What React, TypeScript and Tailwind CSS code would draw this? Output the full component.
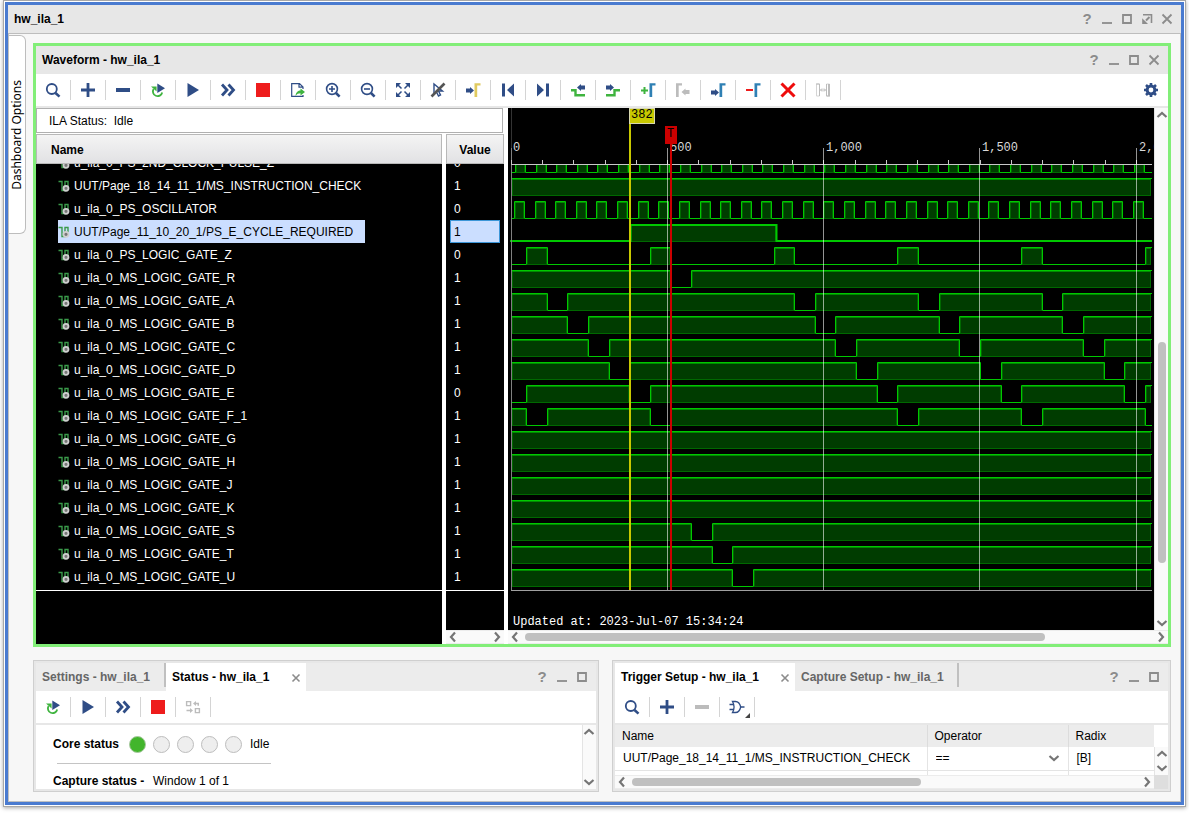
import { useState } from 'react';
import type { ReactNode } from 'react';
import clsx from 'clsx';

const NAVY = '#2f4d86';
const GREEN = '#3fb43f';
const STEEL = '#2f80b4';
const MUTED = '#bcbcbc';

const LIT = '#00c800';
const SHADE = '#008a00';
const DIM = '#006800';
const FILL = '#003c00';

// Waveform canvas geometry
const WAVE_LEFT = 3;
const WAVE_RIGHT = 643;
const WAVE_TOP = 56;
const WAVE_BOTTOM = 482;
const ROW_TOP = 43;
const ROW_HEIGHT = 23;

type Span = [number, number];

// Position of the n-th gate clock edge
const edge = (n: number) => Math.floor(18.5 + 20.633 * n);

const gate = (...steps: number[]): Span[] => {
  const spans: Span[] = [];
  let start = WAVE_LEFT;
  for (const n of steps) {
    spans.push([start, edge(n)]);
    start = edge(n + 1);
  }
  if (start < WAVE_RIGHT) spans.push([start, WAVE_RIGHT]);
  return spans;
};

const pulses = (first: number): Span[] =>
  Array.from({ length: 31 }, (_, i) => {
    const x = Math.floor(first + 20.633 * i);
    return [x, x + 10] as Span;
  });

const HIGH: Span[] = [[WAVE_LEFT, WAVE_RIGHT]];

interface Signal {
  name: string;
  value: string;
  spans: Span[];
}

const SIGNALS: Signal[] = [
  { name: 'u_ila_0_PS_2ND_CLOCK_PULSE_Z', value: '0', spans: pulses(7.4) },
  { name: 'UUT/Page_18_14_11_1/MS_INSTRUCTION_CHECK', value: '1', spans: HIGH },
  { name: 'u_ila_0_PS_OSCILLATOR', value: '0', spans: pulses(6.4) },
  { name: 'UUT/Page_11_10_20_1/PS_E_CYCLE_REQUIRED', value: '1', spans: [[122, 268]] },
  {
    name: 'u_ila_0_PS_LOGIC_GATE_Z',
    value: '0',
    spans: [0, 6, 12, 18, 24, 30].map((n) => [edge(n), Math.min(edge(n + 1), WAVE_RIGHT)] as Span),
  },
  { name: 'u_ila_0_MS_LOGIC_GATE_R', value: '1', spans: gate(7) },
  { name: 'u_ila_0_MS_LOGIC_GATE_A', value: '1', spans: gate(1, 13, 19, 25) },
  { name: 'u_ila_0_MS_LOGIC_GATE_B', value: '1', spans: gate(2, 14, 20, 26) },
  { name: 'u_ila_0_MS_LOGIC_GATE_C', value: '1', spans: gate(3, 15, 21, 27) },
  { name: 'u_ila_0_MS_LOGIC_GATE_D', value: '1', spans: gate(4, 16, 22, 28) },
  { name: 'u_ila_0_MS_LOGIC_GATE_E', value: '0', spans: gate(-1, 5, 17, 23, 29).slice(1) },
  { name: 'u_ila_0_MS_LOGIC_GATE_F_1', value: '1', spans: gate(0, 6, 18, 24, 30) },
  { name: 'u_ila_0_MS_LOGIC_GATE_G', value: '1', spans: HIGH },
  { name: 'u_ila_0_MS_LOGIC_GATE_H', value: '1', spans: HIGH },
  { name: 'u_ila_0_MS_LOGIC_GATE_J', value: '1', spans: HIGH },
  { name: 'u_ila_0_MS_LOGIC_GATE_K', value: '1', spans: HIGH },
  { name: 'u_ila_0_MS_LOGIC_GATE_S', value: '1', spans: gate(8) },
  { name: 'u_ila_0_MS_LOGIC_GATE_T', value: '1', spans: gate(9) },
  { name: 'u_ila_0_MS_LOGIC_GATE_U', value: '1', spans: gate(10) },
];

function Icon({ children }: { children: ReactNode }) {
  return (
    <svg viewBox="0 0 16 16" className="size-4 shrink-0" fill="none" aria-hidden="true">
      {children}
    </svg>
  );
}

const arrowRight = (x: number, y: number, color: string) => (
  <path d={`M${x} ${y - 2}h4v-1.5l4 3.5-4 3.5v-1.5h-4z`} fill={color} />
);
const arrowLeft = (x: number, y: number, color: string) => (
  <path d={`M${x} ${y - 2}h-4v-1.5l-4 3.5 4 3.5v-1.5h4z`} fill={color} />
);
const marker = (x: number, color: string) => (
  <path d={`M${x} 15V1.3h6v2.200h-3.300V15z`} fill={color} />
);

const ICONS = {
  search: (
    <Icon>
      <circle cx="6.8" cy="7" r="5" stroke={NAVY} strokeWidth="1.8" />
      <path d="M10.5 11l4 3.6" stroke={NAVY} strokeWidth="2.6" />
    </Icon>
  ),
  plus: (
    <Icon>
      <path d="M8 1v14M1 8h14" stroke={NAVY} strokeWidth="2.8" />
    </Icon>
  ),
  minus: (
    <Icon>
      <path d="M1 8h14" stroke={NAVY} strokeWidth="4" />
    </Icon>
  ),
  minusOff: (
    <Icon>
      <path d="M1 8h14" stroke={MUTED} strokeWidth="4" />
    </Icon>
  ),
  rerun: (
    <Icon>
      <path d="M3.6 7a4.700 4.700 0 1 0 8.600 3.500" stroke={GREEN} strokeWidth="1.8" />
      <path d="M1 4.600h5.600v5L4.4 7.4z" fill={GREEN} />
      <path d="M7.3 1.5L15 6.2l-7.7 4.8z" fill={NAVY} />
    </Icon>
  ),
  play: (
    <Icon>
      <path d="M2.5 1L14 8 2.5 15z" fill={NAVY} />
    </Icon>
  ),
  forward: (
    <Icon>
      <path d="M2 2.5L7 8l-5 5.5M8.5 2.5l5 5.5-5 5.5" stroke={NAVY} strokeWidth="2.8" />
    </Icon>
  ),
  stop: (
    <Icon>
      <path d="M1 1h14v14H1z" fill="#ee1c1c" />
    </Icon>
  ),
  exportFile: (
    <Icon>
      <path d="M13 7V5L9.5 1.6H1.7v12.8H13V13M9 1.6V5.2h4" stroke={NAVY} strokeWidth="1.2" />
      <path d="M5.5 14c.6-4 2.6-5.4 5-5.4V6.4L15 10l-4.5 3.4v-2.1c-2 0-3.6.7-5 2.7z" fill={GREEN} />
    </Icon>
  ),
  zoomIn: (
    <Icon>
      <circle cx="7" cy="7" r="5.4" stroke={NAVY} strokeWidth="1.6" />
      <path d="M4 7h6M7 4v6" stroke={NAVY} strokeWidth="1.6" />
      <path d="M11 11l3.6 3.6" stroke={NAVY} strokeWidth="2.6" />
    </Icon>
  ),
  zoomOut: (
    <Icon>
      <circle cx="7" cy="7" r="5.4" stroke={NAVY} strokeWidth="1.6" />
      <path d="M4 7h6" stroke={NAVY} strokeWidth="1.6" />
      <path d="M11 11l3.6 3.6" stroke={NAVY} strokeWidth="2.6" />
    </Icon>
  ),
  fit: (
    <Icon>
      <path d="M1 1h5L1 6zM15 1h-5l5 5zM1 15h5l-5-5zM15 15h-5l5-5z" fill={NAVY} />
      <path d="M2 2l4.5 4.5M14 2L9.5 6.5M2 14l4.5-4.5M14 14L9.5 9.5" stroke={NAVY} strokeWidth="1.5" />
    </Icon>
  ),
  noCursor: (
    <Icon>
      <path d="M4 2v10l2.500-2 2 4 2-1-2-4h4z" stroke={NAVY} strokeWidth="1.4" />
      <path d="M1.5 14.5L14.500 1.5" stroke="#555" strokeWidth="2.6" />
    </Icon>
  ),
  toCursor: (
    <Icon>
      {arrowRight(1, 8.5, NAVY)}
      {marker(9.5, '#e0ca60')}
    </Icon>
  ),
  first: (
    <Icon>
      <path d="M2 1.600h3v13H2zM14 1.600v13L7 8z" fill={NAVY} />
    </Icon>
  ),
  last: (
    <Icon>
      <path d="M11 1.600h3v13h-3zM2 1.600v13L9 8z" fill={NAVY} />
    </Icon>
  ),
  prevEdge: (
    <Icon>
      <path d="M1 8.300h4.500v5H15" stroke={GREEN} strokeWidth="2.4" />
      {arrowLeft(15, 5.5, NAVY)}
    </Icon>
  ),
  nextEdge: (
    <Icon>
      <path d="M1 13.300h8.500v-5H15" stroke={GREEN} strokeWidth="2.4" />
      {arrowRight(1, 5.5, NAVY)}
    </Icon>
  ),
  addMarker: (
    <Icon>
      <path d="M4.5 5v7M1 8.5h7" stroke={GREEN} strokeWidth="2" />
      {marker(9.5, STEEL)}
    </Icon>
  ),
  prevMarker: (
    <Icon>
      {marker(1, MUTED)}
      {arrowLeft(14.5, 10, MUTED)}
    </Icon>
  ),
  nextMarker: (
    <Icon>
      {arrowRight(1, 10.5, NAVY)}
      {marker(9.5, STEEL)}
    </Icon>
  ),
  removeMarker: (
    <Icon>
      <path d="M1 8h7" stroke="#ee1c1c" strokeWidth="2" />
      {marker(9.5, STEEL)}
    </Icon>
  ),
  removeAll: (
    <Icon>
      <path d="M1.500 1.500l13 13M14.500 1.500l-13 13" stroke="#ee0c0c" strokeWidth="3" />
    </Icon>
  ),
  swap: (
    <Icon>
      <path d="M1.500 2h3v12h-3zM14.500 2h-3v12h3z" stroke="#d4d4d4" />
      <path d="M4.500 2v12M11.500 2v12M1 2h3.500M11.500 14H15" stroke={MUTED} />
      <path d="M5.500 8h5M7 6.500L5.500 8 7 9.500M9 6.500L10.500 8 9 9.500" stroke={MUTED} />
      <path d="M13 2h2v12h-2z" fill={MUTED} />
    </Icon>
  ),
  layout: (
    <Icon>
      <path d="M1.6 2.6h4v4h-4zM10.4 9.6h4v4h-4z" stroke={MUTED} strokeWidth="1.4" />
      <path d="M8 4.500L11 2v1.700h3v3h-1.500V5.300H11V7zM8 11.500L5 9v1.800H1.500v1.500H5V14z" fill={MUTED} />
    </Icon>
  ),
  gate: (
    <Icon>
      <path d="M3.5 2.5h3c3 0 4.5 2.5 5.2 5.5-.7 3-2.2 5.5-5.2 5.5h-3c2-3.5 2-7.5 0-11z" stroke={NAVY} strokeWidth="1.3" />
      <path d="M.5 5.5H5M.5 10.5H5M11.7 8H15.5" stroke={NAVY} strokeWidth="1.3" />
    </Icon>
  ),
  gear: (
    <Icon>
      <circle cx="8" cy="8" r="3.9" stroke={NAVY} strokeWidth="3" />
      <path
        d="M8 1v3M8 12v3M1 8h3M12 8h3M3 3l2.200 2.200M10.800 10.800L13 13M13 3l-2.200 2.200M5.200 10.800L3 13"
        stroke={NAVY}
        strokeWidth="2.6"
      />
    </Icon>
  ),
};

type IconName = keyof typeof ICONS;

const WAVE_TOOLS: [IconName, string][] = [
  ['search', 'Search'],
  ['plus', 'Add probes'],
  ['minus', 'Remove probes'],
  ['rerun', 'Auto re-trigger'],
  ['play', 'Run trigger'],
  ['forward', 'Run trigger immediate'],
  ['stop', 'Stop trigger'],
  ['exportFile', 'Export data'],
  ['zoomIn', 'Zoom in'],
  ['zoomOut', 'Zoom out'],
  ['fit', 'Zoom fit'],
  ['noCursor', 'Unlink cursor'],
  ['toCursor', 'Go to cursor'],
  ['first', 'Go to first'],
  ['last', 'Go to last'],
  ['prevEdge', 'Previous transition'],
  ['nextEdge', 'Next transition'],
  ['addMarker', 'Add marker'],
  ['prevMarker', 'Previous marker'],
  ['nextMarker', 'Next marker'],
  ['removeMarker', 'Remove marker'],
  ['removeAll', 'Remove all markers'],
  ['swap', 'Swap cursors'],
];

function ToolButton({ icon, label, menu }: { icon: IconName; label: string; menu?: boolean }) {
  return (
    <button
      type="button"
      aria-label={label}
      className="relative flex h-5 w-[35px] shrink-0 items-center justify-center border-r border-[#d4d4d4]"
    >
      {ICONS[icon]}
      {menu && (
        <svg viewBox="0 0 5 5" className="absolute right-1 -bottom-px size-[5px]" aria-hidden="true">
          <path d="M5 0v5H0z" fill="#444" />
        </svg>
      )}
    </button>
  );
}

function Toolbar({ children }: { children: ReactNode }) {
  return (
    <div className="flex h-[34px] items-center border-b-2 border-[#e7e7e7] bg-white">{children}</div>
  );
}

const WINDOW_PATHS = {
  minimize: 'M3 12h10',
  maximize: 'M4 4h8v8H4z',
  float: 'M5 4h8v8M11 6l-5 5M4 7v6h6',
  close: 'M3.5 3.5l9 9M12.5 3.5l-9 9',
};

type WindowAction = 'help' | keyof typeof WINDOW_PATHS;

function WindowControls({ actions }: { actions: WindowAction[] }) {
  return (
    <div className="ml-auto flex shrink-0 pr-1">
      {actions.map((action) => (
        <button
          key={action}
          type="button"
          aria-label={action}
          className="flex size-5 items-center justify-center text-[15px] font-bold text-[#8c8c8c]"
        >
          {action === 'help' ? (
            '?'
          ) : (
            <Icon>
              {action === 'float' ? (
                <>
                  <path d="M4 3.800h8.500V12" stroke="#8c8c8c" strokeWidth="1.6" />
                  <path d="M10.500 6L7 9.500" stroke="#8c8c8c" strokeWidth="2" />
                  <path d="M3.200 7.200V13H9z" fill="#8c8c8c" />
                </>
              ) : (
                <path d={WINDOW_PATHS[action]} stroke="#8c8c8c" strokeWidth="1.8" />
              )}
            </Icon>
          )}
        </button>
      ))}
    </div>
  );
}

const CHEVRONS = {
  up: 'M1.5 8l4.5-4 4.5 4',
  down: 'M1.5 4l4.5 4 4.5-4',
  left: 'M8 1.5L4 6l4 4.5',
  right: 'M4 1.5L8 6l-4 4.5',
};

function Chevron({ direction }: { direction: keyof typeof CHEVRONS }) {
  return (
    <svg viewBox="0 0 12 12" className="size-3 shrink-0" fill="none" aria-hidden="true">
      <path d={CHEVRONS[direction]} stroke="#757575" strokeWidth="2.2" />
    </svg>
  );
}

function ScrollButton({ direction }: { direction: keyof typeof CHEVRONS }) {
  return (
    <button type="button" aria-label={`Scroll ${direction}`} className="flex size-[14px] shrink-0 items-center justify-center">
      <Chevron direction={direction} />
    </button>
  );
}

function HorizontalScroll({ children }: { children?: ReactNode }) {
  return (
    <div className="flex h-[14px] items-center border-y border-[#ececec] bg-[#fafafa]">
      <ScrollButton direction="left" />
      <div className="flex min-w-0 flex-1 items-center pl-[3px]">{children}</div>
      <ScrollButton direction="right" />
    </div>
  );
}

function VerticalScroll({ children }: { children?: ReactNode }) {
  return (
    <div className="flex w-[14px] shrink-0 flex-col items-center border-l border-[#e4e4e4] bg-[#fafafa]">
      <ScrollButton direction="up" />
      <div className="flex min-h-0 flex-1 flex-col justify-end">{children}</div>
      <ScrollButton direction="down" />
    </div>
  );
}

function SignalIcon() {
  return (
    <svg viewBox="0 0 12 12" className="size-3 shrink-0" fill="none" aria-hidden="true">
      <path d="M.5 1.500h3.500V10.500h3V1.500h3V6" stroke="#3a9a4a" strokeWidth="1.4" />
      <circle cx="8" cy="8.300" r="2.500" fill="#777" stroke="#d0d0d0" strokeWidth="1.8" />
    </svg>
  );
}

// Low spans lie between the high ones, so the outline is one polyline
function Wave({ spans, top, selected }: { spans: Span[]; top: number; selected: boolean }) {
  const high = top + (selected ? 5 : 4.5);
  const low = top + (selected ? 21 : 21.5);
  const left = selected ? 2 : WAVE_LEFT;
  let d = `M${left} ${spans[0][0] <= WAVE_LEFT ? high : low}`;
  for (const [start, end] of spans) {
    if (start > WAVE_LEFT) d += `H${start + 0.5}V${high}`;
    d += end < WAVE_RIGHT ? `H${end + 0.5}V${low}` : `H${WAVE_RIGHT + 1}`;
  }
  if (spans[spans.length - 1][1] < WAVE_RIGHT) d += `H${WAVE_RIGHT + 1}`;

  return (
    <g>
      {spans.map(([start, end]) => (
        <g key={start}>
          <rect
            x={start + 1.5}
            y={top + 5.5}
            width={Math.max(end - start - 2, 1)}
            height={16}
            fill={FILL}
            stroke={DIM}
          />
          <rect x={start + 1} y={top + 5} width={Math.max(end - start - 1, 1)} height="1" fill={SHADE} />
        </g>
      ))}
      <path d={d} fill="none" stroke={LIT} strokeWidth={selected ? 2 : 1} />
    </g>
  );
}

const MAJOR_TICKS: [number, string][] = [
  [159, '500'],
  [315, '1,000'],
  [471, '1,500'],
  [628, '2,000'],
];

function WaveCanvas({ selected }: { selected: number }) {
  const minor = Array.from({ length: 21 }, (_, i) => Math.floor(3.3 + 31.25 * i));

  return (
    <svg className="h-[522px] w-full bg-black font-['Liberation_Mono',monospace] text-xs" role="img" aria-label="Waveform">
      <defs>
        <clipPath id="rows">
          <rect x="0" y={WAVE_TOP + 1} width="644" height="430" />
        </clipPath>
      </defs>

      <g clipPath="url(#rows)">
        {SIGNALS.map((signal, i) => (
          <Wave
            key={signal.name}
            spans={signal.spans}
            top={ROW_TOP + i * ROW_HEIGHT}
            selected={i === selected}
          />
        ))}
      </g>

      {/* ruler */}
      <rect x="3" y="0" width="1" height="40" fill="#333" />
      <rect x="3" y="40" width="1" height="442" fill="#808080" />
      <rect x="3" y={WAVE_TOP} width="641" height="1" fill="#c8c8c8" />
      <rect x="3" y={WAVE_BOTTOM} width="641" height="1" fill="#a0a0a0" />
      {minor.map((x) => (
        <rect key={x} x={x} y="52" width="1" height="4" fill="#c8c8c8" />
      ))}
      <text x="5" y="43" fill="#d8d8d8">0</text>
      {MAJOR_TICKS.map(([x, label]) => (
        <g key={label}>
          <rect x={x} y="40" width="1" height="442" fill="#fff" fillOpacity="0.58" />
          <text x={x + 3} y="43" fill="#d8d8d8">
            {label}
          </text>
        </g>
      ))}

      {/* trigger marker */}
      <rect x="162" y="36" width="2" height="446" fill="#cc0000" />
      <rect x="157" y="18" width="12" height="18" fill="#cc0000" />
      <text x="159" y="29" fill="#000">T</text>

      {/* cursor */}
      <rect x="121" y="0" width="2" height="482" fill="#c8c800" />
      <rect x="121.5" y="0.5" width="25" height="15" fill="#c8c800" stroke="#d8d8b0" />
      <text x="123" y="10" fill="#000">382</text>

      <text x="5" y="517" fill="#fff">Updated at: 2023-Jul-07 15:34:24</text>
    </svg>
  );
}

function ColumnHeader({ children, className }: { children: ReactNode; className: string }) {
  return (
    <div
      className={clsx(
        'h-[30px] border border-[#b8b8b8] bg-linear-to-b from-[#f4f4f4] to-[#e2e2e4] leading-[30px] font-bold',
        className
      )}
    >
      {children}
    </div>
  );
}

const LIST_CLASS =
  'flex h-[427px] flex-col justify-end overflow-hidden border-b border-white bg-black pb-[2px] text-white';

function WaveformPanel() {
  const [selected, setSelected] = useState(3);

  return (
    <section className="border-3 border-[#82ee78] bg-white">
      <header className="flex h-7 items-center bg-[#e7e7e7] pl-[6px]">
        <h2 className="font-bold">Waveform - hw_ila_1</h2>
        <WindowControls actions={['help', 'minimize', 'maximize', 'close']} />
      </header>
      <Toolbar>
        {WAVE_TOOLS.map(([icon, label]) => (
          <ToolButton key={icon} icon={icon} label={label} />
        ))}
        <button type="button" aria-label="Settings" className="mr-[9px] ml-auto">
          {ICONS.gear}
        </button>
      </Toolbar>

      <div className="flex">
        <div className="flex w-[468px] shrink-0 flex-col">
          <div className="mr-px mb-px h-[25px] border border-[#b0b0b0] bg-white pl-3 leading-[25px]">
            ILA Status:&nbsp; Idle
          </div>
          <div className="flex flex-1 gap-1">
            <div className="flex flex-1 flex-col bg-black">
              <ColumnHeader className="pl-[14px]">Name</ColumnHeader>
              <ul className={LIST_CLASS}>
                {SIGNALS.map((signal, i) => (
                  <li key={signal.name} className="h-[23px] shrink-0 pl-[22px]">
                    <button
                      type="button"
                      onClick={() => setSelected(i)}
                      className={clsx(
                        'flex h-full items-center gap-1 pr-3 whitespace-nowrap',
                        i === selected && 'bg-[#cbdeff] text-black'
                      )}
                    >
                      <SignalIcon />
                      {signal.name}
                    </button>
                  </li>
                ))}
              </ul>
            </div>
            <div className="flex w-[58px] flex-col bg-black">
              <ColumnHeader className="text-center">Value</ColumnHeader>
              <ul className={LIST_CLASS}>
                {SIGNALS.map((signal, i) => (
                  <li
                    key={signal.name}
                    className={clsx(
                      'mx-1 h-[23px] shrink-0 border pl-[3px] leading-[22px]',
                      i === selected ? 'border-[#3c96d8] bg-[#cbdeff] text-black' : 'border-transparent'
                    )}
                  >
                    {signal.value}
                  </li>
                ))}
              </ul>
              <div className="mt-auto">
                <HorizontalScroll />
              </div>
            </div>
          </div>
        </div>

        <div className="ml-1 min-w-0 flex-1">
          <div className="flex">
            <div className="min-w-0 flex-1">
              <WaveCanvas selected={selected} />
            </div>
            <VerticalScroll>
              <div className="mb-[53px] h-[221px] w-2 rounded-full bg-[#c0c0c0]" />
            </VerticalScroll>
          </div>
          <HorizontalScroll>
            <div className="h-2 w-[520px] rounded-full bg-[#c0c0c0]" />
          </HorizontalScroll>
        </div>
      </div>
    </section>
  );
}

function ActiveTab({ children }: { children: ReactNode }) {
  return (
    <div className="flex items-center bg-white pr-1 pl-[6px] font-bold">
      <span>{children}</span>
      <button type="button" aria-label="Close tab" className="ml-auto pt-[2px]">
        <svg viewBox="0 0 12 12" className="size-3" aria-hidden="true">
          <path d="M2.5 2.5l7 7M9.5 2.5l-7 7" stroke="#8c8c8c" strokeWidth="1.6" />
        </svg>
      </button>
    </div>
  );
}

function IdleTab({ children }: { children: ReactNode }) {
  return (
    <button type="button" className="h-6 border-r-2 border-[#c0c0c0] pt-1 pl-[6px] text-left font-bold text-[#666]">
      {children}
    </button>
  );
}

function StatusPanel() {
  return (
    <section className="min-w-0 flex-[566_1_0%] border border-[#cfcfcf] bg-[#e7e7e7] p-[2px]">
      <header className="flex h-7 bg-[#ececec]">
        <div className="grid grid-cols-[130px_140px]">
          <IdleTab>Settings - hw_ila_1</IdleTab>
          <ActiveTab>Status - hw_ila_1</ActiveTab>
        </div>
        <div className="ml-auto flex items-center">
          <WindowControls actions={['help', 'minimize', 'maximize']} />
        </div>
      </header>
      <Toolbar>
        <ToolButton icon="rerun" label="Auto re-trigger" />
        <ToolButton icon="play" label="Run trigger" />
        <ToolButton icon="forward" label="Run trigger immediate" />
        <ToolButton icon="stop" label="Stop trigger" />
        <ToolButton icon="layout" label="Layout" />
      </Toolbar>
      <div className="flex h-16 overflow-hidden bg-white">
        <div className="flex-1 pl-[17px]">
          <div className="flex h-[38px] items-center">
            <span className="w-[76px] font-bold">Core status</span>
            <div className="flex gap-[7px]">
              {[true, false, false, false, false].map((on, i) => (
                <span
                  key={i}
                  className={clsx(
                    'size-[17px] rounded-full border',
                    on ? 'border-[#a8c8a0] bg-[#42b52c]' : 'border-[#bdbdbd] bg-[#eeeeee]'
                  )}
                />
              ))}
            </div>
            <span className="pl-2">Idle</span>
          </div>
          <div className="ml-1 w-[214px] border-t border-[#c4c4c4]" />
          <div className="flex pt-[9px]">
            <span className="w-[100px] font-bold">Capture status -</span>
            <span>Window 1 of 1</span>
          </div>
        </div>
        <VerticalScroll />
      </div>
    </section>
  );
}

function TriggerPanel() {
  return (
    <section className="min-w-0 flex-[559_1_0%] border border-[#cfcfcf] bg-[#e7e7e7] p-[2px]">
      <header className="flex h-7 bg-[#ececec]">
        <div className="grid grid-cols-[180px_164px]">
          <ActiveTab>Trigger Setup - hw_ila_1</ActiveTab>
          <IdleTab>Capture Setup - hw_ila_1</IdleTab>
        </div>
        <div className="ml-auto flex items-center">
          <WindowControls actions={['help', 'minimize', 'maximize']} />
        </div>
      </header>
      <Toolbar>
        <ToolButton icon="search" label="Search" />
        <ToolButton icon="plus" label="Add probe" />
        <ToolButton icon="minusOff" label="Remove probe" />
        <ToolButton icon="gate" label="Trigger condition" menu />
      </Toolbar>
      <div className="flex h-[50px] bg-white">
        <div className="min-w-0 flex-1 overflow-hidden">
          <table className="w-full table-fixed border-collapse text-left">
            <colgroup>
              <col />
              <col className="w-[141px]" />
              <col className="w-[86px]" />
            </colgroup>
            <thead className="bg-[#ececec]">
              <tr className="h-[22px]">
                <th className="p-0 pl-[7px] font-normal">Name</th>
                <th className="border-l border-[#dcdcdc] p-0 pl-[7px] font-normal">Operator</th>
                <th className="border-l border-[#dcdcdc] p-0 pl-[7px] font-normal">Radix</th>
              </tr>
            </thead>
            <tbody>
              <tr className="h-[23px] border-b border-[#e4e4e4]">
                <td className="p-0 pl-2 whitespace-nowrap">UUT/Page_18_14_11_1/MS_INSTRUCTION_CHECK</td>
                <td className="border-l border-[#e4e4e4] p-0">
                  <div className="relative flex items-center">
                    <select aria-label="Operator" className="w-full appearance-none bg-transparent pl-2">
                      <option>==</option>
                      <option>!=</option>
                    </select>
                    <span className="pointer-events-none absolute right-2">
                      <Chevron direction="down" />
                    </span>
                  </div>
                </td>
                <td className="border-l border-[#e4e4e4] p-0 pl-2">[B]</td>
              </tr>
              <tr className="h-[22px]">
                <td className="p-0" />
                <td className="border-l border-[#e4e4e4] p-0" />
                <td className="border-l border-[#e4e4e4] p-0" />
              </tr>
            </tbody>
          </table>
        </div>
        <div className="flex pt-[22px]">
          <VerticalScroll />
        </div>
      </div>
      <div className="flex">
        <div className="min-w-0 flex-1">
          <HorizontalScroll>
            <div className="h-2 w-[289px] rounded-full bg-[#c0c0c0]" />
          </HorizontalScroll>
        </div>
        <div className="w-[14px] bg-[#dedede]" />
      </div>
    </section>
  );
}

export default function App() {
  return (
    <div className="min-h-screen bg-white pr-[3px] pb-[5px] pl-[3px] font-['Liberation_Sans',Arial,sans-serif] text-xs text-black">
      <div className="border border-[#a8a8a8] p-px shadow-[0_1px_4px_rgba(0,0,0,0.35)]">
        <div className="border-3 border-[#4a7bd0] bg-[#f7f7f7]">
          <header className="flex h-[29px] items-center border-b border-[#bdbdbd] bg-[#e7e7e7] pl-[6px]">
            <h1 className="font-bold">hw_ila_1</h1>
            <WindowControls actions={['help', 'minimize', 'maximize', 'float', 'close']} />
          </header>

          <div className="flex gap-[7px] border-x border-b border-[#c0c0c0] pr-[9px]">
            <aside className="pt-px">
              <button
                type="button"
                className="flex h-[199px] w-[17px] items-center justify-center rounded-r-md border border-l-0 border-[#bdbdbd] bg-white font-['Noto_Sans',sans-serif]"
              >
                <span className="rotate-180 [writing-mode:vertical-rl]">Dashboard Options</span>
              </button>
            </aside>
            <main className="flex min-w-0 flex-1 flex-col gap-[13px] pt-[9px] pb-[9px]">
              <WaveformPanel />
              <div className="flex gap-[13px]">
                <StatusPanel />
                <TriggerPanel />
              </div>
            </main>
          </div>
        </div>
      </div>
    </div>
  );
}
